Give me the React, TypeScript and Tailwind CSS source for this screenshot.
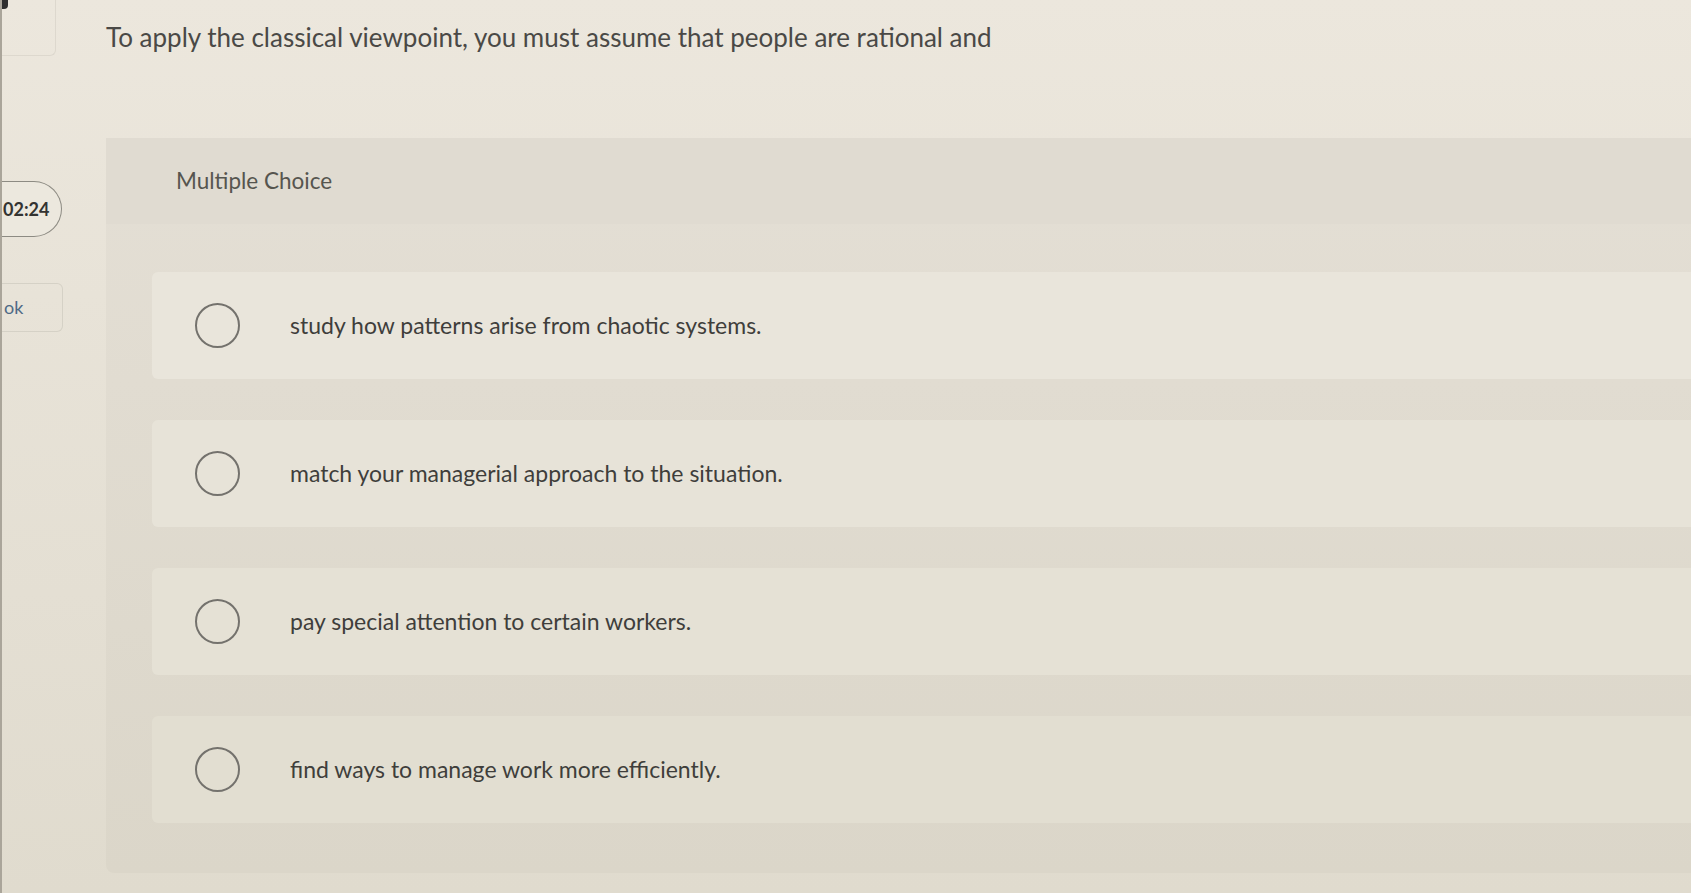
import React from 'react';

const options = [
  { text: 'study how patterns arise from chaotic systems.', bg: 'bg-[#e9e5db]' },
  { text: 'match your managerial approach to the situation.', bg: 'bg-[#e7e3d8]' },
  { text: 'pay special attention to certain workers.', bg: 'bg-[#e5e1d5]' },
  { text: 'find ways to manage work more efficiently.', bg: 'bg-[#e2ded1]' },
];

const Radio = () => (
  <span className="block w-[45px] h-[45px] shrink-0 rounded-full border-2 border-[#74726d]" />
);

export default function App() {
  return (
    <div
      className="relative w-full h-[893px] overflow-hidden flex bg-linear-to-b from-[#ece7dd] to-[#e0dbce] border-l-2 border-[#aaa59a]"
      style={{ fontFamily: 'Lato, "Noto Sans", sans-serif' }}
    >
      <span className="absolute left-0 top-0 w-[6px] h-[9px] rounded-br-sm bg-[#2e2e2e]" />

      {/* side column */}
      <aside className="w-[62px] shrink-0 flex flex-col">
        <div className="w-[54px] h-[56px] rounded-br-md border-r border-b border-[#ddd8ce]" />
        <div className="mt-[125px] h-[56px] w-[60px] rounded-r-full border-[1.5px] border-l-0 border-[#8d8b83] bg-[#ece8de] flex items-center pl-[1px]">
          <span className="text-[18px] font-bold text-[#333331]">02:24</span>
        </div>
        <div className="mt-[46px] h-[49px] w-[61px] rounded-r-md border border-l-0 border-[#d5d1c6] flex items-center pl-[2px]">
          <span className="text-[18px] text-[#4f6a86]">ok</span>
        </div>
      </aside>

      {/* main */}
      <main className="flex-1 flex flex-col pl-[42px]">
        <h1 className="pt-[20px] h-[138px] text-[26px] leading-[34px] text-[#4a4946] font-normal">
          To apply the classical viewpoint, you must assume that people are rational and
        </h1>

        <section className="h-[735px] rounded-tl-sm rounded-bl-lg flex flex-col bg-linear-to-b from-[#e4dfd5] to-[#dbd6c9]">
          <div className="h-[86px] bg-[#e0dbd1] flex items-center pl-[70px]">
            <span className="text-[22.5px] text-[#56554f]">Multiple Choice</span>
          </div>

          <div className="flex flex-col gap-[41px] pt-[48px] pl-[46px]">
            {options.map((o) => (
              <div
                key={o.text}
                className={`h-[107px] rounded-l-md flex items-center pl-[43px] ${o.bg}`}
              >
                <Radio />
                <span className="ml-[50px] text-[23px] text-[#3f3e3b]">{o.text}</span>
              </div>
            ))}
          </div>
        </section>
      </main>
    </div>
  );
}
